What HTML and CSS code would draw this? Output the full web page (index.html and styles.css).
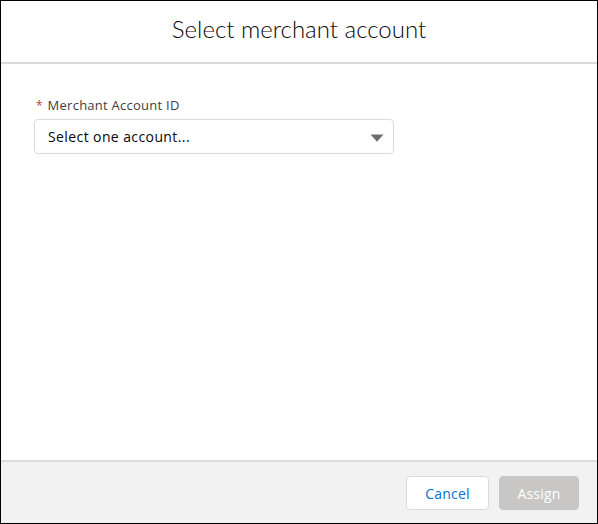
FILE: index.html
```html
<!DOCTYPE html>
<html>
<head>
<meta charset="utf-8">
<link rel="stylesheet" href="styles.css">
</head>
<body>
<div class="modal">
  <header class="modal-header">
    <h2 class="modal-title">Select merchant account</h2>
  </header>
  <main class="modal-body">
    <label class="field-label"><abbr class="required" title="required">*</abbr>Merchant Account ID</label>
    <div class="combobox">
      <span class="combobox-text">Select one account...</span>
      <svg class="combobox-icon" width="14" height="8" viewBox="0 0 14 8"><path d="M0.5 0.5 H13.5 L7 7.8 Z" fill="#706e6b"/></svg>
    </div>
  </main>
  <footer class="modal-footer">
    <button class="btn btn-neutral">Cancel</button>
    <button class="btn btn-disabled" disabled>Assign</button>
  </footer>
</div>
</body>
</html>
```
FILE: styles.css
```css
* { box-sizing: border-box; }
html, body { margin: 0; padding: 0; background: #fff; }
body { font-family: "Open Sans", Lato, "Liberation Sans", sans-serif; color: #080707; }
.modal {
  width: 598px;
  height: 524px;
  border: 1px solid #000;
  display: flex;
  flex-direction: column;
  background: #fff;
}
.modal-header {
  height: 63px;
  flex: none;
  border-bottom: 2px solid #dddbda;
  display: flex;
  align-items: center;
  justify-content: center;
  padding-bottom: 7px;
}
.modal-title {
  margin: 0;
  font-family: Lato, "Open Sans", sans-serif;
  font-weight: 300;
  font-size: 24px;
  color: #080707;
}
.modal-body {
  flex: 1;
  padding: 32px 0 0 33px;
}
.field-label {
  display: block;
  font-size: 13px;
  letter-spacing: 0.25px;
  color: #3e3e3c;
  line-height: 18px;
  margin-bottom: 4px;
}
.required {
  color: #c23934;
  text-decoration: none;
  border: 0;
  margin: 0 5px 0 2px;
  font-size: 12px;
  letter-spacing: 0;
}
.combobox {
  width: 360px;
  height: 35px;
  border: 1px solid #dddbda;
  border-radius: 4px;
  display: flex;
  align-items: center;
  justify-content: space-between;
  padding: 0 9px 0 13px;
  font-size: 14px;
  letter-spacing: 0.4px;
}
.combobox-icon { margin-top: 2px; }
.modal-footer {
  height: 63px;
  flex: none;
  border-top: 2px solid #dddbda;
  background: #f3f2f2;
  display: flex;
  justify-content: flex-end;
  align-items: flex-start;
  padding: 14px 18px 0 0;
  gap: 10px;
}
.btn {
  height: 34px;
  border-radius: 4px;
  font-family: inherit;
  font-size: 14px;
  letter-spacing: 0.2px;
  padding: 0;
}
.btn-neutral {
  width: 83px;
  background: #fff;
  border: 1px solid #dddbda;
  color: #0070d2;
}
.btn-disabled {
  width: 80px;
  background: #c9c7c5;
  border: 1px solid #c9c7c5;
  color: #fff;
}
```
